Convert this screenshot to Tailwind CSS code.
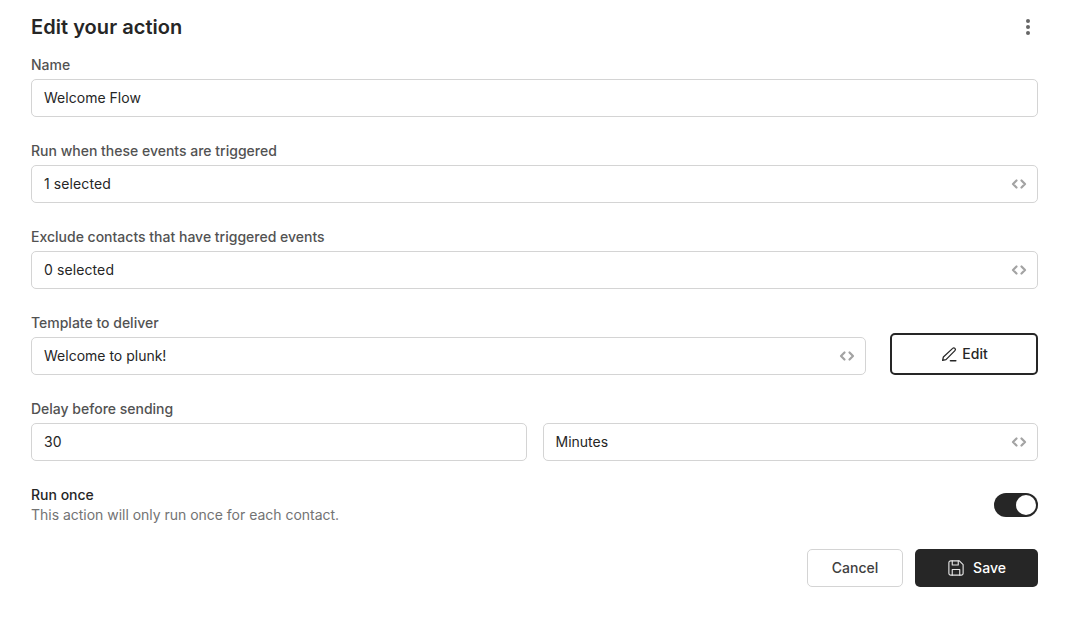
<!doctype html>
<html>
<head>
<meta charset="utf-8">
<script src="https://cdn.jsdelivr.net/npm/@tailwindcss/browser@4"></script>
</head>
<body class="bg-white">
<div class="w-[1069px] h-[618px] overflow-hidden bg-white pl-[31px] pr-[31px] pt-[12px] font-['Inter',sans-serif] text-[#262626]">
  <div class="flex items-center justify-between h-[30px]">
    <h1 class="text-[20px] leading-[30px] font-semibold text-[#262626] tracking-[0.05px]">Edit your action</h1>
    <svg class="w-6 h-6 mr-[-2px] text-[#666]" viewBox="0 0 24 24" fill="currentColor"><circle cx="12" cy="6" r="2"/><circle cx="12" cy="12" r="2"/><circle cx="12" cy="18" r="2"/></svg>
  </div>
  <div class="mt-[13px]">
    <div class="text-[14px] leading-[20px] text-[#525252] h-[24px] [font-weight:450]">Name</div>
    <div class="h-[38px] border border-[#d4d4d4] rounded-[5px] flex items-center px-[12px] text-[14px] tracking-[0.02px]"><span class="mb-[2px]">Welcome Flow</span></div>
  </div>
  <div class="mt-[24px]">
    <div class="text-[14px] leading-[20px] text-[#525252] h-[24px] [font-weight:450]">Run when these events are triggered</div>
    <div class="h-[38px] border border-[#d4d4d4] rounded-[5px] flex items-center justify-between pl-[12px] pr-[10px] text-[14px] tracking-[0.1px]"><span class="mb-[2px]">1 selected</span>
      <svg class="w-4 h-4 text-[#a3a3a3]" viewBox="0 0 16 16" fill="none" stroke="currentColor" stroke-width="2.2" stroke-linecap="round" stroke-linejoin="round"><path d="M5.5 4.5 2 8l3.5 3.5M10.5 4.5 14 8l-3.5 3.5"/></svg>
    </div>
  </div>
  <div class="mt-[24px]">
    <div class="text-[14px] leading-[20px] text-[#525252] h-[24px] [font-weight:450]">Exclude contacts that have triggered events</div>
    <div class="h-[38px] border border-[#d4d4d4] rounded-[5px] flex items-center justify-between pl-[12px] pr-[10px] text-[14px] tracking-[0.1px]"><span class="mb-[2px]">0 selected</span>
      <svg class="w-4 h-4 text-[#a3a3a3]" viewBox="0 0 16 16" fill="none" stroke="currentColor" stroke-width="2.2" stroke-linecap="round" stroke-linejoin="round"><path d="M5.5 4.5 2 8l3.5 3.5M10.5 4.5 14 8l-3.5 3.5"/></svg>
    </div>
  </div>
  <div class="mt-[24px] flex gap-[24px]">
    <div class="w-[835px]">
      <div class="text-[14px] leading-[20px] text-[#525252] h-[24px] [font-weight:450]">Template to deliver</div>
      <div class="h-[38px] border border-[#d4d4d4] rounded-[5px] flex items-center justify-between pl-[12px] pr-[10px] text-[14px]"><span class="mb-[2px]">Welcome to plunk!</span>
        <svg class="w-4 h-4 text-[#a3a3a3]" viewBox="0 0 16 16" fill="none" stroke="currentColor" stroke-width="2.2" stroke-linecap="round" stroke-linejoin="round"><path d="M5.5 4.5 2 8l3.5 3.5M10.5 4.5 14 8l-3.5 3.5"/></svg>
      </div>
    </div>
    <div class="w-[148px] h-[42px] mt-[20px] border-2 border-[#262626] rounded-[5px] flex items-center justify-center gap-[4px] text-[14px] [font-weight:450]">
      <svg class="w-[18px] h-[18px]" viewBox="0 0 24 24" fill="none" stroke="currentColor" stroke-width="1.7" stroke-linecap="round" stroke-linejoin="round"><path d="M16.9 4.5a2.1 2.1 0 0 1 3 3L8 19.5l-4.5 1 1-4.5z"/><path d="M14 21h7" stroke-width="2.2"/></svg>
      <span class="mb-[2px]">Edit</span>
    </div>
  </div>
  <div class="mt-[24px]">
    <div class="text-[14px] leading-[20px] text-[#525252] h-[24px] [font-weight:450]">Delay before sending</div>
    <div class="grid grid-cols-2 gap-4">
      <div class="h-[38px] border border-[#d4d4d4] rounded-[5px] flex items-center px-[12px] text-[14px]"><span class="mb-[2px]">30</span></div>
      <div class="h-[38px] border border-[#d4d4d4] rounded-[5px] flex items-center justify-between pl-[12px] pr-[10px] text-[14px]"><span class="mb-[2px]">Minutes</span>
        <svg class="w-4 h-4 text-[#a3a3a3]" viewBox="0 0 16 16" fill="none" stroke="currentColor" stroke-width="2.2" stroke-linecap="round" stroke-linejoin="round"><path d="M5.5 4.5 2 8l3.5 3.5M10.5 4.5 14 8l-3.5 3.5"/></svg>
      </div>
    </div>
  </div>
  <div class="mt-[24px] flex items-center justify-between">
    <div>
      <div class="text-[14px] leading-[20px] [font-weight:450] text-[#262626]">Run once</div>
      <div class="text-[14px] leading-[20px] text-[#737373] tracking-[-0.02px]">This action will only run once for each contact.</div>
    </div>
    <div class="w-[44px] h-[24px] rounded-full bg-[#262626] flex items-center justify-end pr-[2px]">
      <div class="w-[20px] h-[20px] rounded-full bg-white"></div>
    </div>
  </div>
  <div class="mt-[24px] flex justify-end gap-[12px]">
    <div class="w-[96px] h-[38px] border border-[#d4d4d4] rounded-[5px] flex items-center justify-center text-[14px] [font-weight:450] text-[#404040]"><span class="mb-[2px]">Cancel</span></div>
    <div class="w-[123px] h-[38px] rounded-[5px] bg-[#262626] text-white flex items-center justify-center gap-[8px] text-[14px] [font-weight:450]">
      <svg class="w-[18px] h-[18px] text-[#e5e5e5]" viewBox="0 0 24 24" fill="none" stroke="currentColor" stroke-width="1.5" stroke-linecap="round" stroke-linejoin="round"><path d="M5 2.5h11.5L21.5 7.5V19a2.5 2.5 0 0 1-2.5 2.5H5A2.5 2.5 0 0 1 2.5 19V5A2.5 2.5 0 0 1 5 2.5z"/><path d="M7 21.5V14h10v7.5"/><path d="M7 2.5V8h8V2.5"/></svg>
      <span class="mb-[2px]">Save</span>
    </div>
  </div>
</div>
</body>
</html>
